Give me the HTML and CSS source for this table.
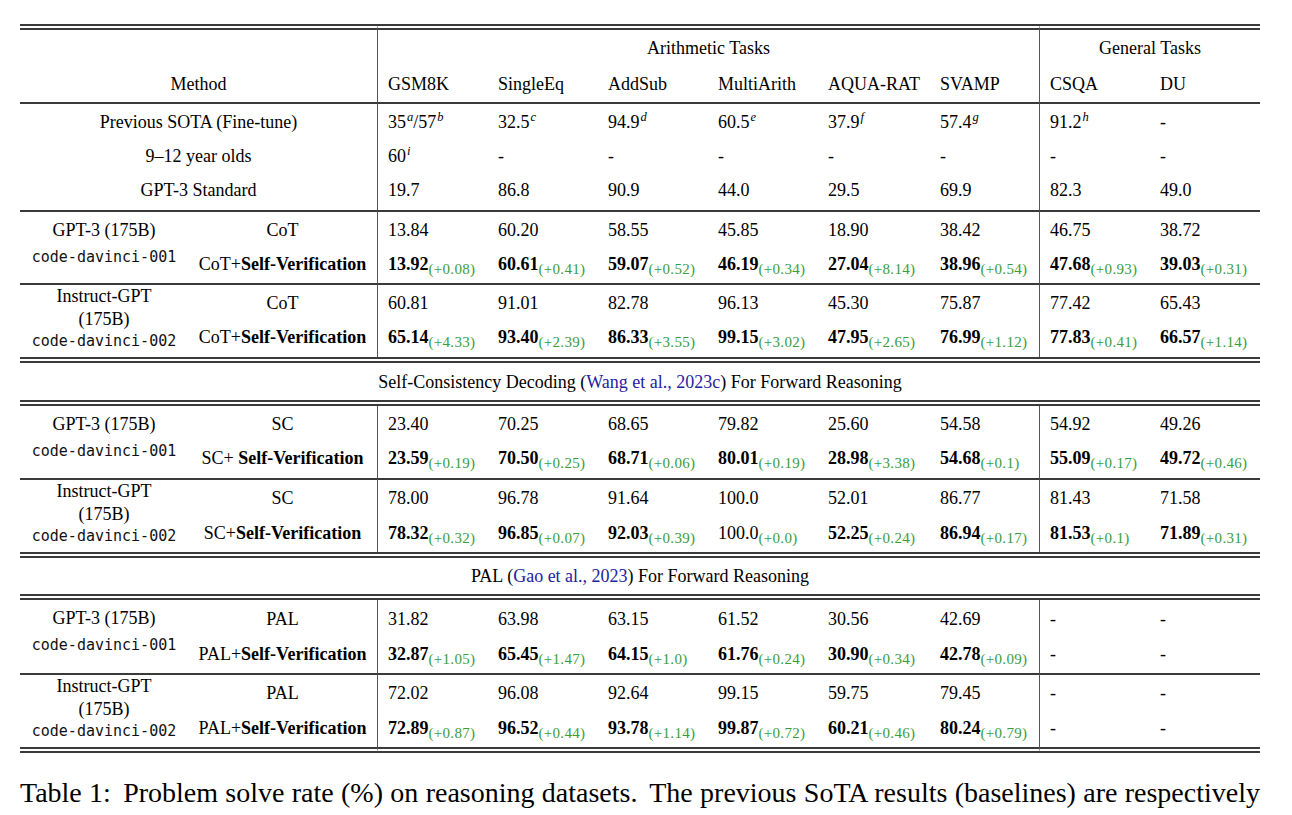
FILE: index.html
```html
<!DOCTYPE html>
<html lang="en">
<head>
<meta charset="utf-8">
<title>Table 1</title>
<link rel="stylesheet" href="styles.css">
</head>
<body>
<div class="page">
<table class="res">
  <colgroup>
    <col class="w-model"><col class="w-meth">
    <col class="w-d"><col class="w-d"><col class="w-d"><col class="w-d"><col class="w-aqua"><col class="w-d">
    <col class="w-d"><col class="w-d">
  </colgroup>
  <thead>
    <tr class="hr1">
      <th colspan="2" class="vr"></th>
      <th colspan="6" class="c vr">Arithmetic Tasks</th>
      <th colspan="2" class="c">General Tasks</th>
    </tr>
    <tr class="hr2">
      <th colspan="2" class="c vr">Method</th>
      <th>GSM8K</th><th>SingleEq</th><th>AddSub</th><th>MultiArith</th><th>AQUA-RAT</th><th class="vr">SVAMP</th>
      <th>CSQA</th><th>DU</th>
    </tr>
  </thead>
  <tbody>
    <tr class="h35">
      <td colspan="2" class="c vr">Previous SOTA (Fine-tune)</td>
      <td>35<span class="sp">a</span>/57<span class="sp">b</span></td>
      <td>32.5<span class="sp">c</span></td>
      <td>94.9<span class="sp">d</span></td>
      <td>60.5<span class="sp">e</span></td>
      <td>37.9<span class="sp">f</span></td>
      <td class="vr">57.4<span class="sp">g</span></td>
      <td>91.2<span class="sp">h</span></td>
      <td>-</td>
    </tr>
    <tr class="h34">
      <td colspan="2" class="c vr">9–12 year olds</td>
      <td>60<span class="sp">i</span></td><td>-</td><td>-</td><td>-</td><td>-</td><td class="vr">-</td><td>-</td><td>-</td>
    </tr>
    <tr class="h37 pb3">
      <td colspan="2" class="c vr">GPT-3 Standard</td>
      <td>19.7</td><td>86.8</td><td>90.9</td><td>44.0</td><td>29.5</td><td class="vr">69.9</td><td>82.3</td><td>49.0</td>
    </tr>

    <!-- CoT group 1 -->
    <tr class="rt h38">
      <td rowspan="2" class="model"><div class="ml">GPT-3 (175B)</div><div class="ml mono gap">code-davinci-001</div></td>
      <td class="c vr">CoT</td>
      <td>13.84</td><td>60.20</td><td>58.55</td><td>45.85</td><td>18.90</td><td class="vr">38.42</td><td>46.75</td><td>38.72</td>
    </tr>
    <tr class="h35 pb4">
      <td class="c vr">CoT+<b>Self-Verification</b></td>
      <td><b>13.92</b><span class="d">(+0.08)</span></td>
      <td><b>60.61</b><span class="d">(+0.41)</span></td>
      <td><b>59.07</b><span class="d">(+0.52)</span></td>
      <td><b>46.19</b><span class="d">(+0.34)</span></td>
      <td><b>27.04</b><span class="d">(+8.14)</span></td>
      <td class="vr"><b>38.96</b><span class="d">(+0.54)</span></td>
      <td><b>47.68</b><span class="d">(+0.93)</span></td>
      <td><b>39.03</b><span class="d">(+0.31)</span></td>
    </tr>
    <!-- CoT group 2 -->
    <tr class="rt h37">
      <td rowspan="2" class="model inst"><div>Instruct-GPT</div><div>(175B)</div><div class="mono">code-davinci-002</div></td>
      <td class="c vr">CoT</td>
      <td>60.81</td><td>91.01</td><td>82.78</td><td>96.13</td><td>45.30</td><td class="vr">75.87</td><td>77.42</td><td>65.43</td>
    </tr>
    <tr class="h37 pb3">
      <td class="c vr">CoT+<b>Self-Verification</b></td>
      <td><b>65.14</b><span class="d">(+4.33)</span></td>
      <td><b>93.40</b><span class="d">(+2.39)</span></td>
      <td><b>86.33</b><span class="d">(+3.55)</span></td>
      <td><b>99.15</b><span class="d">(+3.02)</span></td>
      <td><b>47.95</b><span class="d">(+2.65)</span></td>
      <td class="vr"><b>76.99</b><span class="d">(+1.12)</span></td>
      <td><b>77.83</b><span class="d">(+0.41)</span></td>
      <td><b>66.57</b><span class="d">(+1.14)</span></td>
    </tr>

    <tr class="ttl h49">
      <td colspan="10" class="c">Self-Consistency Decoding (<span class="cite">Wang et al., 2023c</span>) For Forward Reasoning</td>
    </tr>

    <!-- SC group 1 -->
    <tr class="h36">
      <td rowspan="2" class="model"><div class="ml">GPT-3 (175B)</div><div class="ml mono gap">code-davinci-001</div></td>
      <td class="c vr">SC</td>
      <td>23.40</td><td>70.25</td><td>68.65</td><td>79.82</td><td>25.60</td><td class="vr">54.58</td><td>54.92</td><td>49.26</td>
    </tr>
    <tr class="h36 pb4">
      <td class="c vr">SC+ <b>Self-Verification</b></td>
      <td><b>23.59</b><span class="d">(+0.19)</span></td>
      <td><b>70.50</b><span class="d">(+0.25)</span></td>
      <td><b>68.71</b><span class="d">(+0.06)</span></td>
      <td><b>80.01</b><span class="d">(+0.19)</span></td>
      <td><b>28.98</b><span class="d">(+3.38)</span></td>
      <td class="vr"><b>54.68</b><span class="d">(+0.1)</span></td>
      <td><b>55.09</b><span class="d">(+0.17)</span></td>
      <td><b>49.72</b><span class="d">(+0.46)</span></td>
    </tr>
    <!-- SC group 2 -->
    <tr class="rt h38">
      <td rowspan="2" class="model inst"><div>Instruct-GPT</div><div>(175B)</div><div class="mono">code-davinci-002</div></td>
      <td class="c vr">SC</td>
      <td>78.00</td><td>96.78</td><td>91.64</td><td>100.0</td><td>52.01</td><td class="vr">86.77</td><td>81.43</td><td>71.58</td>
    </tr>
    <tr class="h36 pb3">
      <td class="c vr">SC+<b>Self-Verification</b></td>
      <td><b>78.32</b><span class="d">(+0.32)</span></td>
      <td><b>96.85</b><span class="d">(+0.07)</span></td>
      <td><b>92.03</b><span class="d">(+0.39)</span></td>
      <td>100.0<span class="d">(+0.0)</span></td>
      <td><b>52.25</b><span class="d">(+0.24)</span></td>
      <td class="vr"><b>86.94</b><span class="d">(+0.17)</span></td>
      <td><b>81.53</b><span class="d">(+0.1)</span></td>
      <td><b>71.89</b><span class="d">(+0.31)</span></td>
    </tr>

    <tr class="ttl h48">
      <td colspan="10" class="c">PAL (<span class="cite">Gao et al., 2023</span>) For Forward Reasoning</td>
    </tr>

    <!-- PAL group 1 -->
    <tr class="h38">
      <td rowspan="2" class="model"><div class="ml">GPT-3 (175B)</div><div class="ml mono gap">code-davinci-001</div></td>
      <td class="c vr">PAL</td>
      <td>31.82</td><td>63.98</td><td>63.15</td><td>61.52</td><td>30.56</td><td class="vr">42.69</td><td>-</td><td>-</td>
    </tr>
    <tr class="h35 pb4">
      <td class="c vr">PAL+<b>Self-Verification</b></td>
      <td><b>32.87</b><span class="d">(+1.05)</span></td>
      <td><b>65.45</b><span class="d">(+1.47)</span></td>
      <td><b>64.15</b><span class="d">(+1.0)</span></td>
      <td><b>61.76</b><span class="d">(+0.24)</span></td>
      <td><b>30.90</b><span class="d">(+0.34)</span></td>
      <td class="vr"><b>42.78</b><span class="d">(+0.09)</span></td>
      <td>-</td><td>-</td>
    </tr>
    <!-- PAL group 2 -->
    <tr class="rt h38">
      <td rowspan="2" class="model inst last"><div>Instruct-GPT</div><div>(175B)</div><div class="mono">code-davinci-002</div></td>
      <td class="c vr">PAL</td>
      <td>72.02</td><td>96.08</td><td>92.64</td><td>99.15</td><td>59.75</td><td class="vr">79.45</td><td>-</td><td>-</td>
    </tr>
    <tr class="h42 pb3 lastrow">
      <td class="c vr">PAL+<b>Self-Verification</b></td>
      <td><b>72.89</b><span class="d">(+0.87)</span></td>
      <td><b>96.52</b><span class="d">(+0.44)</span></td>
      <td><b>93.78</b><span class="d">(+1.14)</span></td>
      <td><b>99.87</b><span class="d">(+0.72)</span></td>
      <td><b>60.21</b><span class="d">(+0.46)</span></td>
      <td class="vr"><b>80.24</b><span class="d">(+0.79)</span></td>
      <td>-</td><td>-</td>
    </tr>
  </tbody>
</table>
<p class="caption">Table 1:<span class="sent"></span> Problem solve rate (%) on reasoning datasets.<span class="sent"></span> The previous SoTA results (baselines) are respectively</p>
</div>
</body>
</html>
```

FILE: styles.css
```css
html, body {
  margin: 0;
  padding: 0;
  background: #ffffff;
}

body {
  font-family: "Liberation Serif", "Times New Roman", serif;
  color: #000;
}

.page {
  padding: 24px 32px 0 20px;
}

.res {
  width: 1240px;
  border-collapse: separate;
  border-spacing: 0;
  table-layout: fixed;
  font-size: 18px;
  line-height: 22px;
}

.w-model { width: 168px; }
.w-meth { width: 190px; }
.w-d { width: 110px; }
.w-aqua { width: 112px; }

.res th,
.res td {
  padding: 0 0 0 10px;
  text-align: left;
  vertical-align: middle;
  font-weight: normal;
  white-space: nowrap;
  box-sizing: border-box;
}

.res .c {
  text-align: center;
  padding-left: 0;
}

.res .vr {
  border-right: 1px solid #555;
}

/* header */
.hr1 { height: 41px; }
.hr1 > th { border-top: 6px double #3a3a3a; }
.hr2 { height: 39px; }
.hr2 > th { border-bottom: 2px solid #3a3a3a; }

/* row heights */
.h34 { height: 34px; }
.h35 { height: 35px; }
.h36 { height: 36px; }
.h37 { height: 37px; }
.h38 { height: 38px; }
.h42 { height: 42px; }
.h48 { height: 48px; }
.h49 { height: 49px; }

.pb3 > td { padding-bottom: 3px; }
.pb4 > td { padding-bottom: 4px; }

.rt > td { border-top: 2px solid #3a3a3a; }

.ttl > td {
  border-top: 6px double #3a3a3a;
  border-bottom: 6px double #3a3a3a;
}

.lastrow > td,
.res td.last {
  border-bottom: 6px double #3a3a3a;
}

/* model cells */
.res td.model {
  text-align: center;
  vertical-align: top;
  padding: 7px 0 0 0;
}

.res td.model.inst {
  padding-top: 0;
}

.ml { line-height: 22px; }
.gap { margin-top: 5px; }
.inst > div { line-height: 22.5px; }

.mono {
  font-family: "DejaVu Sans Mono", "Liberation Mono", monospace;
  font-size: 15px;
  color: #111;
}

.res b {
  font-weight: bold;
}

.d {
  color: #3a9d3a;
  font-size: 15px;
  letter-spacing: 0.3px;
  vertical-align: -4px;
  line-height: 0;
}

.sp {
  font-size: 12.5px;
  font-style: italic;
  vertical-align: 7px;
  line-height: 0;
  margin-left: 1px;
}

.cite {
  color: #23239e;
}

.caption {
  margin: 24px 0 0 0;
  width: 1240px;
  font-size: 28px;
  line-height: 32px;
  text-align: justify;
  text-align-last: justify;
  white-space: nowrap;
}

.sent {
  display: inline-block;
  width: 5px;
}
```
